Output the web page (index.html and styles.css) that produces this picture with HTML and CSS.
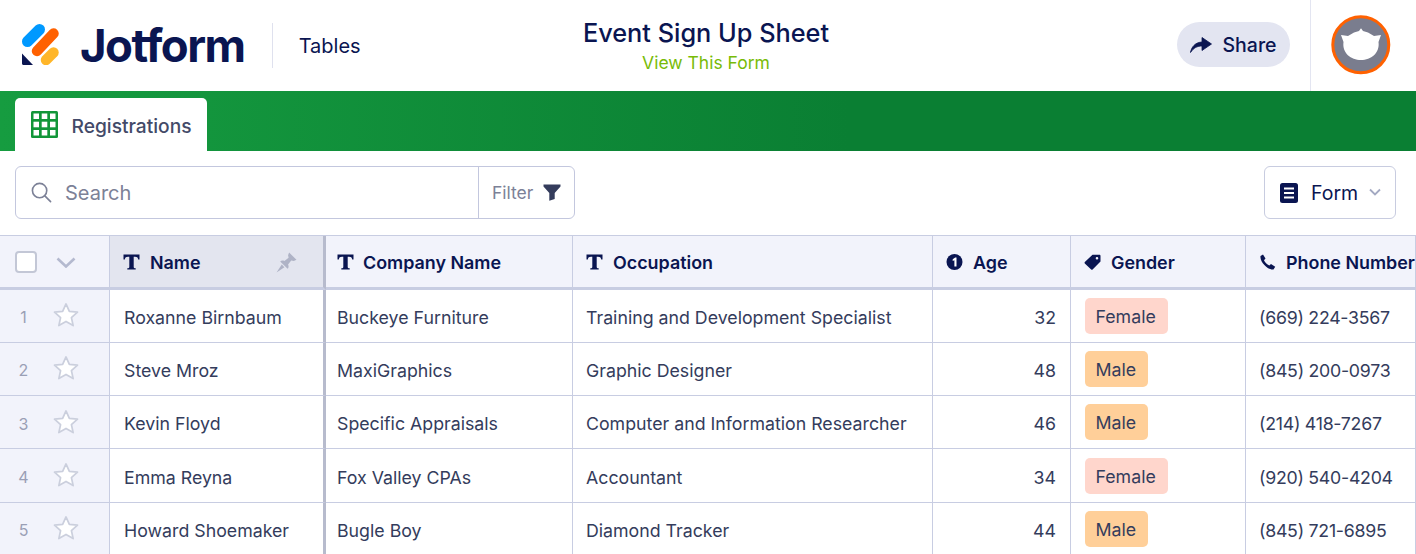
FILE: index.html
```html
<!DOCTYPE html>
<html lang="en">
<head>
<meta charset="utf-8">
<title>Event Sign Up Sheet</title>
<link rel="stylesheet" href="styles.css">
</head>
<body>
<svg class="defs" width="0" height="0" aria-hidden="true">
  <defs>
    <symbol id="t" viewBox="0 0 17 16"><path d="M0.5 0.5H16.5V5.5H15.2C14.9 3.4 14 2.7 12 2.7H10.7V13C10.7 13.9 11.2 14.2 12.7 14.2V15.5H4.3V14.2C5.8 14.2 6.3 13.9 6.3 13V2.7H5C3 2.7 2.1 3.4 1.8 5.5H0.5Z" fill="#0a1551"/></symbol>
    <symbol id="star" viewBox="0 0 24 24"><path d="M12 1.8L15.1 8.6L22.6 9.4L17 14.4L18.6 21.8L12 18L5.400 21.8L7 14.4L1.400 9.400L8.900 8.600Z" fill="#fff" stroke="#cbcfdd" stroke-width="1.600" stroke-linejoin="round"/></symbol>
  </defs>
</svg>

<header class="topbar">
  <div class="brand">
    <svg class="logo" viewBox="0 0 38 41" aria-hidden="true">
      <path d="M5.500 17.500L17.500 5.500" stroke="#0099ff" stroke-width="11" stroke-linecap="round" fill="none"/>
      <path d="M15 27L31.500 9.500" stroke="#ff6100" stroke-width="10.500" stroke-linecap="round" fill="none"/>
      <path d="M24 36L31.500 28.500" stroke="#ffb629" stroke-width="10.500" stroke-linecap="round" fill="none"/>
      <path d="M0 29.500L11 41H1.500C.6 41 0 40.400 0 39.500Z" fill="#0a1551"/>
    </svg>
    <span class="wordmark">Jotform</span>
    <span class="brand-rule"></span>
    <span class="product">Tables</span>
  </div>
  <div class="title-block">
    <h1 class="title">Event Sign Up Sheet</h1>
    <a class="form-link">View This Form</a>
  </div>
  <div class="top-actions">
    <button class="share">
      <svg class="share-icon" viewBox="0 0 22 16" aria-hidden="true"><path d="M0.500 15.500C1.500 10 5 5.500 12 5V0.500L21.500 7L12 13.500V9C7 9 3.500 11 0.500 15.500Z" fill="#0a1551" stroke="#0a1551" stroke-width=".8" stroke-linejoin="round"/></svg>
      <span>Share</span>
    </button>
    <div class="avatar-cell">
      <svg class="avatar" viewBox="0 0 60 60" aria-hidden="true">
        <circle cx="29.800" cy="29.800" r="28" fill="#7a7d8e" stroke="#ff6100" stroke-width="3"/>
        <path d="M10 20L17 21L23 17.500L28 16L30 13.300L32 16L37 17.500L43 21L50 20L47.500 27C49 38 40 45 30 45C20 45 11 38 12.500 27Z" fill="#fff"/>
      </svg>
    </div>
  </div>
</header>

<nav class="tabbar">
  <div class="tab">
    <svg class="tab-icon" viewBox="0 0 27 27" aria-hidden="true">
      <rect width="27" height="27" rx="1.500" fill="#129639"/>
      <g fill="#fff">
        <rect x="2.500" y="2.500" width="5.500" height="5.500"/><rect x="10.700" y="2.500" width="5.600" height="5.500"/><rect x="19" y="2.500" width="5.500" height="5.500"/>
        <rect x="2.500" y="10.700" width="5.500" height="5.600"/><rect x="10.700" y="10.700" width="5.600" height="5.600"/><rect x="19" y="10.700" width="5.500" height="5.600"/>
        <rect x="2.500" y="19" width="5.500" height="5.500"/><rect x="10.700" y="19" width="5.600" height="5.500"/><rect x="19" y="19" width="5.500" height="5.500"/>
      </g>
    </svg>
    <span>Registrations</span>
  </div>
</nav>

<section class="toolbar">
  <div class="search">
    <div class="search-field">
      <svg class="search-icon" viewBox="0 0 22 22" aria-hidden="true"><circle cx="9" cy="9" r="7.500" fill="none" stroke="#7c8197" stroke-width="1.700"/><path d="M14.500 14.500L20.500 20.500" stroke="#7c8197" stroke-width="1.700" stroke-linecap="round"/></svg>
      <span>Search</span>
    </div>
    <div class="filter">
      <span>Filter</span>
      <svg class="filter-icon" viewBox="0 0 18 17" aria-hidden="true"><path d="M0.500 0.500H17.500V2.500L11.700 9V15L6.300 16.800V9L0.500 2.500Z" fill="#343c5c"/></svg>
    </div>
  </div>
  <div class="form-select">
    <svg class="doc-icon" viewBox="0 0 18 20" aria-hidden="true"><rect width="18" height="20" rx="2.500" fill="#0a1551"/><path d="M4 5.500H14M4 10H14M4 14.500H14" stroke="#fff" stroke-width="2"/></svg>
    <span>Form</span>
    <svg class="small-chevron" viewBox="0 0 12 8" aria-hidden="true"><path d="M1 1.500L6 6.500L11 1.500" fill="none" stroke="#a3a9c2" stroke-width="1.800"/></svg>
  </div>
</section>

<main class="grid">
  <div class="cell head control">
    <span class="checkbox"></span>
    <svg class="head-chevron" viewBox="0 0 20 11" aria-hidden="true"><path d="M1.500 1.500L10 9.500L18.500 1.500" fill="none" stroke="#b4b9cf" stroke-width="2.600"/></svg>
  </div>
  <div class="cell head pinned-head">
    <svg class="type-icon"><use href="#t"/></svg><span>Name</span>
    <svg class="pin" viewBox="0 0 20 20" aria-hidden="true"><path d="M12.500 0.500L19.500 7.500L17 8.500L14.500 8L11.500 12C12.300 14 12 15 11 16L4 9C5 8 6.500 7.700 8 8.500L12 5.500L11.500 3Z M5.500 12L8 14.500L0.500 19.500Z" fill="#afb3c6"/></svg>
  </div>
  <div class="cell head after-pin"><svg class="type-icon"><use href="#t"/></svg><span>Company Name</span></div>
  <div class="cell head"><svg class="type-icon"><use href="#t"/></svg><span>Occupation</span></div>
  <div class="cell head">
    <svg class="head-icon" viewBox="0 0 16 16" aria-hidden="true"><circle cx="8" cy="8" r="8" fill="#0a1551"/><path d="M6.200 5.200L8.700 3.600H10V12.400H7.900V6.200L6.200 7.100Z" fill="#fff"/></svg>
    <span>Age</span>
  </div>
  <div class="cell head">
    <svg class="head-icon" viewBox="0 0 17 16" aria-hidden="true"><path d="M8.500 0.700H15.500C16 0.700 16.500 1.200 16.500 1.700V7.500L8.600 15.500C8.200 15.900 7.600 15.900 7.200 15.500L0.800 9.500C0.400 9.100 0.400 8.500 0.800 8.100ZM13 3A1.300 1.300 0 1 0 13 5.600A1.300 1.300 0 1 0 13 3Z" fill="#0a1551" fill-rule="evenodd"/></svg>
    <span>Gender</span>
  </div>
  <div class="cell head">
    <svg class="head-icon" viewBox="0 0 16 16" aria-hidden="true"><path d="M3.500 0.500L6 4.500L4.500 6.200C5.300 8.200 7.500 10.500 9.800 11.500L11.500 10L15.700 12.700L14 15.500C9 16.500 0 8 1 2Z" fill="#0a1551"/></svg>
    <span>Phone Number</span>
  </div>

  <div class="cell control"><span class="row-num">1</span><svg class="star"><use href="#star"/></svg></div>
  <div class="cell pinned">Roxanne Birnbaum</div>
  <div class="cell after-pin">Buckeye Furniture</div>
  <div class="cell">Training and Development Specialist</div>
  <div class="cell number">32</div>
  <div class="cell"><span class="tag female">Female</span></div>
  <div class="cell phone">(669) 224-3567</div>

  <div class="cell control"><span class="row-num">2</span><svg class="star"><use href="#star"/></svg></div>
  <div class="cell pinned">Steve Mroz</div>
  <div class="cell after-pin">MaxiGraphics</div>
  <div class="cell">Graphic Designer</div>
  <div class="cell number">48</div>
  <div class="cell"><span class="tag male">Male</span></div>
  <div class="cell phone">(845) 200-0973</div>

  <div class="cell control"><span class="row-num">3</span><svg class="star"><use href="#star"/></svg></div>
  <div class="cell pinned">Kevin Floyd</div>
  <div class="cell after-pin">Specific Appraisals</div>
  <div class="cell">Computer and Information Researcher</div>
  <div class="cell number">46</div>
  <div class="cell"><span class="tag male">Male</span></div>
  <div class="cell phone">(214) 418-7267</div>

  <div class="cell control"><span class="row-num">4</span><svg class="star"><use href="#star"/></svg></div>
  <div class="cell pinned">Emma Reyna</div>
  <div class="cell after-pin">Fox Valley CPAs</div>
  <div class="cell">Accountant</div>
  <div class="cell number">34</div>
  <div class="cell"><span class="tag female">Female</span></div>
  <div class="cell phone">(920) 540-4204</div>

  <div class="cell control"><span class="row-num">5</span><svg class="star"><use href="#star"/></svg></div>
  <div class="cell pinned">Howard Shoemaker</div>
  <div class="cell after-pin">Bugle Boy</div>
  <div class="cell">Diamond Tracker</div>
  <div class="cell number">44</div>
  <div class="cell"><span class="tag male">Male</span></div>
  <div class="cell phone">(845) 721-6895</div>
</main>
</body>
</html>
```

FILE: styles.css
```css
* { box-sizing: border-box; }

html, body {
  margin: 0;
  height: 554px;
  overflow: hidden;
  background: #fff;
  font-family: Inter, "Liberation Sans", sans-serif;
  color: #343c5c;
}

.defs { position: absolute; }

.topbar {
  height: 91px;
  display: grid;
  grid-template-columns: 1fr auto 1fr;
  align-items: center;
  padding-right: 4px;
}

.brand { display: flex; align-items: center; padding-left: 22px; }
.logo { width: 38px; height: 41px; flex: none; margin-top: -2px; }
.wordmark {
  margin-left: 20px;
  font-size: 45.500px;
  font-weight: 700;
  letter-spacing: -1.500px;
  color: #0a1551;
  line-height: 46px;
}
.brand-rule { width: 1.500px; height: 45px; background: #dfe1ee; margin-left: 27px; }
.product { margin-left: 25.500px; font-size: 20px; color: #0a1551; }

.title-block { text-align: center; padding-top: 1px; }
.title { margin: 0; font-size: 25.300px; line-height: 32px; font-weight: 500; color: #0a1551; }
.form-link { display: block; font-size: 17.500px; line-height: 24px; margin-top: 1.500px; color: #78bb07; }

.top-actions { display: flex; justify-content: flex-end; align-items: stretch; height: 91px; margin-right: -4px; }
.share {
  align-self: center;
  width: 113px;
  height: 45px;
  margin-top: -2px;
  border: 0;
  border-radius: 23px;
  background: #e3e5f1;
  display: flex;
  align-items: center;
  justify-content: center;
  gap: 10px;
  font: 500 19.500px Inter, "Liberation Sans", sans-serif;
  color: #0a1551;
}
.share-icon { width: 22px; height: 16px; }
.avatar-cell {
  width: 106px;
  margin-left: 20px;
  border-left: 1.500px solid #e3e5f1;
  display: flex;
  align-items: center;
  padding-left: 20px;
}
.avatar { width: 60px; height: 60px; margin-top: -1px; }

.tabbar {
  height: 60px;
  padding: 7px 0 0 15px;
  background: linear-gradient(90deg, #169c40 0%, #0a7f33 60%);
}
.tab {
  width: 192px;
  height: 53px;
  padding-top: 2px;
  background: #fff;
  border-radius: 5px 5px 0 0;
  display: flex;
  align-items: center;
  padding-left: 16px;
  gap: 13.500px;
  font-size: 19.200px;
  font-weight: 500;
  color: #434a68;
}
.tab-icon { width: 27px; height: 27px; margin-top: -3px; }

.toolbar {
  height: 84px;
  padding: 15px 20px 16px 15px;
  display: flex;
  justify-content: space-between;
}
.search {
  width: 560px;
  display: flex;
  border: 1.500px solid #c3c7de;
  border-radius: 6px;
}
.search-field {
  flex: 1;
  display: flex;
  align-items: center;
  padding-left: 15px;
  gap: 13px;
  font-size: 20px;
  color: #7c8197;
}
.search-icon { width: 21px; height: 21px; }
.filter {
  width: 96px;
  border-left: 1.500px solid #c3c7de;
  display: flex;
  align-items: center;
  padding-left: 13px;
  gap: 10px;
  font-size: 17.500px;
  color: #7c8197;
}
.filter-icon { width: 18px; height: 17px; }
.form-select {
  width: 132px;
  border: 1.500px solid #c8cce0;
  border-radius: 6px;
  display: flex;
  align-items: center;
  padding-left: 15px;
  font-size: 19.500px;
  color: #0a1551;
}
.doc-icon { width: 18px; height: 20px; }
.form-select span { margin-left: 13px; }
.small-chevron { width: 12px; height: 8px; margin-left: 11px; margin-top: -2px; }

.grid {
  display: grid;
  grid-template-columns: 110px 216px 247px 360px 138px 175px 1fr;
  grid-template-rows: 53.500px repeat(5, 53.300px);
  border-top: 1.500px solid #c8cde2;
  font-size: 17.750px;
}
.cell {
  display: flex;
  align-items: center;
  padding: 3px 0 0 13px;
  border-right: 1.500px solid #c8cde2;
  border-bottom: 1.500px solid #c8cde2;
  white-space: nowrap;
  overflow: hidden;
  color: #343c5c;
}
.head {
  background: #f2f3fb;
  border-bottom: 3px solid #c8cde2;
  padding-top: 1.500px;
  font-size: 17.900px;
  font-weight: 600;
  color: #0a1551;
}
.control { background: #f2f3fb; padding-left: 0; position: relative; }
.pinned-head, .pinned { border-right: 3px solid #b7bbcd; }
.pinned { padding-left: 14px; }
.pinned-head { background: #e3e5ef; position: relative; }
.after-pin { padding-left: 11px; }

.checkbox {
  width: 22px;
  height: 22px;
  margin-left: 15px;
  background: #fff;
  border: 2.500px solid #c3c7d6;
  border-radius: 4px;
}
.head-chevron { width: 20px; height: 11px; margin-left: 19px; }
.row-num { width: 17px; margin-left: 15px; font-size: 16px; font-weight: 400; color: #9a9fb5; text-align: center; }
.star { width: 26px; height: 26px; margin-left: 21px; margin-top: -4px; }

.type-icon { width: 17px; height: 16px; margin-right: 10px; flex: none; }
.after-pin .type-icon { margin-right: 9px; }
.head-icon { width: 17px; height: 16px; margin-right: 10px; flex: none; }
.pin { position: absolute; right: 26px; top: 16px; width: 21px; height: 21px; }

.number { justify-content: flex-end; padding: 3px 14px 0 0; }
.tag {
  height: 36px;
  margin: -3px 0 0 1px;
  padding: 1.500px 12px 0 10.500px;
  border-radius: 5px;
  display: flex;
  align-items: center;
}
.female { background: #ffd6cc; }
.male { background: #ffcf99; }
.phone { letter-spacing: -.27px; }
```
